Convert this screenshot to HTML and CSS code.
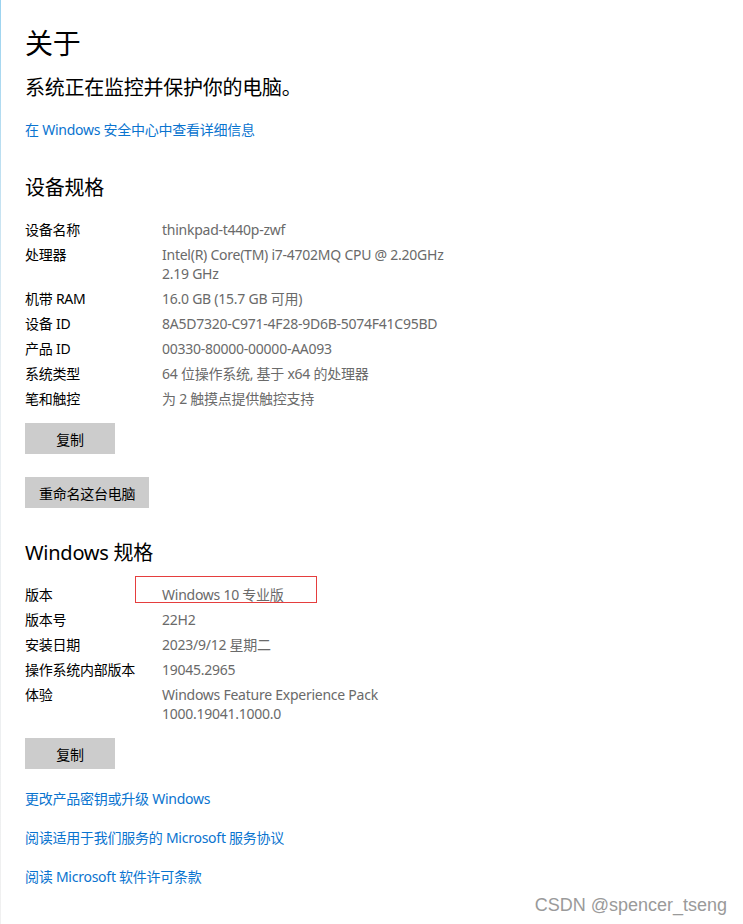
FILE: index.html
```html
<!DOCTYPE html>
<html lang="zh-CN">
<head>
    <meta charset="UTF-8">
    <meta name="viewport" content="width=device-width, initial-scale=1.0">
    <title>关于</title>
    <link rel="stylesheet" href="styles.css">
</head>
<body>

    <div class="page">
        <h1 class="title">关于</h1>
        <p class="subtitle">系统正在监控并保护你的电脑。</p>
        <a class="link first-link" href="#">在 Windows 安全中心中查看详细信息</a>

        <h2 class="heading">设备规格</h2>
        <div class="specs">
            <div class="row"><span class="label">设备名称</span><span class="value">thinkpad-t440p-zwf</span></div>
            <div class="row"><span class="label">处理器</span><span class="value">Intel(R) Core(TM) i7-4702MQ CPU @ 2.20GHz<br>2.19 GHz</span></div>
            <div class="row"><span class="label">机带 RAM</span><span class="value">16.0 GB (15.7 GB 可用)</span></div>
            <div class="row"><span class="label">设备 ID</span><span class="value">8A5D7320-C971-4F28-9D6B-5074F41C95BD</span></div>
            <div class="row"><span class="label">产品 ID</span><span class="value">00330-80000-00000-AA093</span></div>
            <div class="row"><span class="label">系统类型</span><span class="value">64 位操作系统, 基于 x64 的处理器</span></div>
            <div class="row"><span class="label">笔和触控</span><span class="value">为 2 触摸点提供触控支持</span></div>
        </div>
        <button class="btn">复制</button>
        <button class="btn rename">重命名这台电脑</button>

        <h2 class="heading win-heading">Windows 规格</h2>
        <div class="specs">
            <div class="row marked"><span class="label">版本</span><span class="value">Windows 10 专业版</span><div class="mark"></div></div>
            <div class="row"><span class="label">版本号</span><span class="value">22H2</span></div>
            <div class="row"><span class="label">安装日期</span><span class="value">2023/9/12 星期二</span></div>
            <div class="row"><span class="label">操作系统内部版本</span><span class="value">19045.2965</span></div>
            <div class="row"><span class="label">体验</span><span class="value">Windows Feature Experience Pack<br>1000.19041.1000.0</span></div>
        </div>
        <button class="btn">复制</button>

        <div class="links">
            <a class="link" href="#">更改产品密钥或升级 Windows</a>
            <a class="link" href="#">阅读适用于我们服务的 Microsoft 服务协议</a>
            <a class="link" href="#">阅读 Microsoft 软件许可条款</a>
        </div>
    </div>

    <div class="watermark">CSDN @spencer_tseng</div>

</body>
</html>
```

FILE: styles.css
```css
body {
    margin: 0;
    background-color: #ffffff;
    font-family: "Noto Sans", "Noto Sans CJK SC", sans-serif;
    color: #000000;
    overflow: hidden;
}
.page {
    min-height: 924px;
    box-sizing: border-box;
    padding: 25px 0 0 24px;
    border-left: 1px solid;
    border-image: linear-gradient(#9ad3f0, #e8eef2 40%, #f0f0f0) 1;
    letter-spacing: -0.25px;
}
.title {
    margin: 0;
    font-size: 28px;
    line-height: 36px;
    font-weight: 400;
}
.subtitle {
    margin: 13px 0 0;
    font-size: 20px;
    line-height: 28px;
}
.link {
    display: block;
    width: max-content;
    color: #0a74cf;
    text-decoration: none;
    font-size: 14px;
    line-height: 19px;
}
.first-link {
    margin-top: 18px;
}
.heading {
    margin: 35px 0 0;
    font-size: 20px;
    line-height: 28px;
    font-weight: 400;
}
.win-heading {
    margin-top: 31px;
}
.specs {
    display: flex;
    flex-direction: column;
    gap: 6px;
    margin-top: 18px;
    font-size: 14px;
    line-height: 19px;
}
.win-heading + .specs {
    margin-top: 18px;
}
.row {
    display: flex;
}
.marked {
    position: relative;
}
.label {
    width: 137px;
    flex-shrink: 0;
}
.value {
    color: #6a6a6a;
}
/* 截图上的红色标注框 */
.mark {
    position: absolute;
    left: 110px;
    top: -9px;
    width: 180px;
    height: 25px;
    border: 1px solid #e53e3e;
}
.btn {
    display: block;
    min-width: 90px;
    height: 31px;
    padding: 0 14px;
    margin-top: 15px;
    border: none;
    background: #cccccc;
    font-family: inherit;
    font-size: 14px;
    letter-spacing: inherit;
    color: #000000;
}
.rename {
    margin-top: 23px;
}
.links {
    display: flex;
    flex-direction: column;
    gap: 20px;
    margin-top: 20px;
}
.watermark {
    position: absolute;
    right: 16px;
    bottom: 8px;
    font-family: "Liberation Sans", sans-serif;
    font-size: 18px;
    color: #9a9a9a;
}
```
